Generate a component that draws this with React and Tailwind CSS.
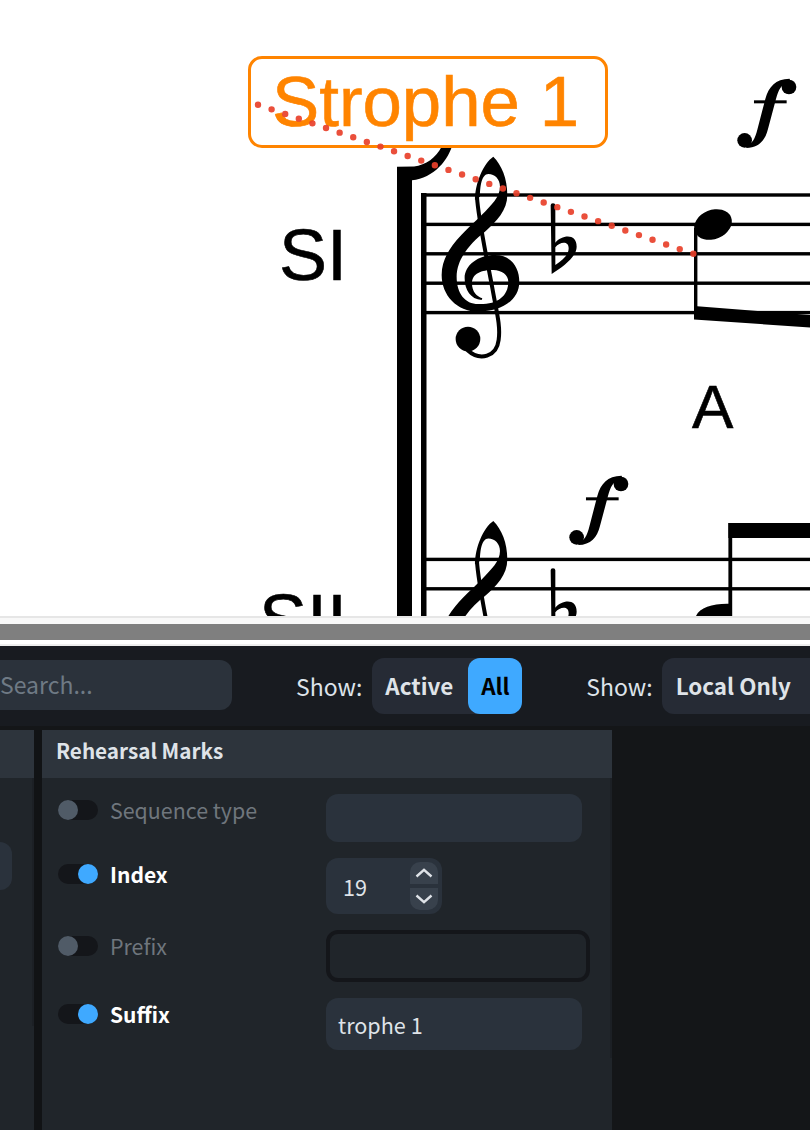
import React from 'react';

const uiFont = { fontFamily: '"Noto Sans CJK SC", "Noto Sans", sans-serif' };

const Clef = ({ dy = 0 }) => (
  <g transform={`translate(230 ${40 + dy}) scale(0.3333)`}>
    <path d="M790 350 C815 375 832 415 832 465 C832 510 800 545 765 575 C725 605 680 655 680 710 C680 760 705 792 745 792 C800 794 835 770 835 725 C835 705 815 690 790 690 C755 690 726 700 726 730 C726 755 740 770 757 775 L755 780 C722 778 704 750 704 715 C704 675 745 645 795 645 C845 645 868 685 868 725 C868 780 815 815 745 815 C680 815 635 765 635 705 C635 630 700 580 755 525 C785 495 810 470 810 440 C810 418 795 402 775 402 C755 402 750 440 750 470 L735 480 C735 430 760 370 790 350 Z" />
    <path d="M741 470 C745 540 770 650 790 760 C800 815 812 860 806 900 C800 950 750 965 712 930" fill="none" stroke="#000" strokeWidth="12" />
    <circle cx="714" cy="897" r="37" />
  </g>
);

const Flat = ({ dy = 0 }) => (
  <g transform={`translate(520 ${60 + dy}) scale(0.3333)`}>
    <path d="M92 436 Q92 430 99 430 Q106 430 106 436 L106 548 C125 525 170 518 170 560 C170 590 130 620 95 642 Z M106 562 L106 615 C130 598 146 585 146 565 C146 542 120 545 106 562 Z" fillRule="evenodd" />
  </g>
);

const Forte = ({ dx = 0, dy = 0 }) => (
  <g transform={`translate(${400 + dx} ${460 + dy}) scale(0.3333)`}>
    <path d="M665 47 C622 47 602 72 592 108 L568 200 C562 225 552 245 535 247 L535 255 C572 255 592 232 600 198 L624 108 C632 80 640 58 668 60 Z" />
    <circle cx="663" cy="72" r="22" />
    <circle cx="530" cy="232" r="22" />
    <rect x="558" y="112" width="98" height="9" />
  </g>
);

const staffY = [195, 224.4, 253.8, 283.2, 312.6];

const Score = () => (
  <div className="relative h-[616px] overflow-hidden bg-white font-['Liberation_Sans',sans-serif] text-black [-webkit-text-stroke:0.6px]">
    <svg className="absolute inset-0" width="810" height="616" viewBox="0 0 810 616">
      {staffY.map((y) => (
        <rect key={y} x="425" y={y - 1.7} width="385" height="3.4" />
      ))}
      {staffY.slice(0, 2).map((y) => (
        <rect key={y} x="425" y={y + 364.4 - 1.7} width="385" height="3.4" />
      ))}
      <rect x="397" y="178" width="15" height="438" />
      <rect x="421" y="193" width="5.5" height="423" />
      <path d="M397 166.7 L414 166.5 C426 165 436 158 442 146 L452 146 C447 163 430 180.5 408 180.5 L397 180.5 Z" />
      <Clef />
      <Clef dy={364.4} />
      <Flat />
      <Flat dy={365} />
      <ellipse cx="713" cy="224.5" rx="19.5" ry="14.5" transform="rotate(-22 713 224.5)" />
      <rect x="694" y="228" width="3.4" height="85" />
      <path d="M694 306 L810 315 L810 327.5 L694 319.5 Z" />
      <rect x="728.4" y="523" width="3.8" height="93" />
      <path d="M728.4 523 H810 V538 H728.4 Z" />
      <path d="M696 616 C700 607 715 603 732 604 L732 616 Z" />
      <Forte />
      <Forte dx={168} dy={-397} />
    </svg>

    <div className="absolute left-[248px] top-[56px] h-[92px] w-[360px] rounded-[14px] border-[3px] border-[#ff8400] bg-white" />
    <div className="absolute left-[272px] top-[67px] text-[70.8px] leading-none whitespace-nowrap text-[#ff8400]">Strophe 1</div>
    <div className="absolute left-[279px] top-[219px] text-[72px] leading-none">SI</div>
    <div className="absolute left-[259px] top-[584px] text-[72px] leading-none">SII</div>
    <div className="absolute left-[692px] top-[376px] text-[62px] leading-none">A</div>

    <svg className="absolute inset-0" width="810" height="616" viewBox="0 0 810 616">
      <line x1="258" y1="104.7" x2="693.5" y2="253.8" stroke="#e8402a" strokeOpacity="0.92" strokeWidth="6.4" strokeLinecap="round" strokeDasharray="0 14.38" />
    </svg>
  </div>
);

const Toggle = ({ on, label }) => (
  <div className="flex w-[284px] items-start pl-4">
    <div className={`relative mt-[6px] flex h-5 w-10 shrink-0 rounded-full bg-[#14161a] ${on ? 'justify-end' : 'justify-start'}`}>
      <span className={`h-5 w-5 rounded-full ${on ? 'bg-[#3fa9ff]' : 'bg-[#505b67]'}`} />
    </div>
    <span className={`ml-3 leading-8 ${on ? 'text-[21px] font-semibold text-white' : 'text-[21.4px] text-[#6f767d]'}`}>{label}</span>
  </div>
);

const Spin = ({ up }) => (
  <div className={`flex h-[22px] w-7 items-center justify-center bg-[#38414c] ${up ? 'rounded-t-[10px]' : 'rounded-b-[10px]'}`}>
    <svg width="18" height="10" viewBox="0 0 18 10" fill="none" stroke="#dfe3e8" strokeWidth="2.4">
      <path d={up ? 'M1.5 8.5 L9 1.8 L16.5 8.5' : 'M1.5 1.5 L9 8.2 L16.5 1.5'} />
    </svg>
  </div>
);

const Panel = () => (
  <div className="relative w-[570px] bg-[#20252a]">
    <div className="flex h-12 items-center bg-[#2d343c] pb-[6px] pl-[14px] text-[20.7px] font-semibold text-[#dfe3e8]">Rehearsal Marks</div>
    <div className="absolute right-0 top-12 h-[280px] w-[2px] bg-[#1c2025]" />
    <div className="flex flex-col gap-4 pt-4">
      <div className="flex">
        <Toggle label="Sequence type" />
        <div className="h-12 w-64 rounded-xl bg-[#2a323c]" />
      </div>
      <div className="flex">
        <Toggle on label="Index" />
        <div className="flex h-14 w-[116px] items-center justify-between rounded-xl bg-[#2a323c] pl-[17px] pr-1 text-[21.6px] text-[#dfe3e8]">
          <span className="pt-[2px]">19</span>
          <div className="flex flex-col gap-1">
            <Spin up />
            <Spin />
          </div>
        </div>
      </div>
      <div className="flex">
        <Toggle label="Prefix" />
        <div className="h-[52px] w-[264px] rounded-xl border-4 border-[#14161a]" />
      </div>
      <div className="flex">
        <Toggle on label="Suffix" />
        <div className="flex h-[52px] w-64 items-center rounded-xl bg-[#2a323c] pl-3 pt-[2px] text-[21.6px] text-[#dfe3e8]">trophe 1</div>
      </div>
    </div>
  </div>
);

const Toolbar = () => (
  <div className="flex h-20 items-center overflow-hidden bg-[#181b20] text-[23px]">
    <div className="-ml-3 mb-[2px] flex h-[50px] w-[244px] shrink-0 items-center rounded-xl bg-[#2b323b] pb-[2px] pl-3 text-[#6f7a85]">Search...</div>
    <span className="ml-[64px] text-[#dde3ea]">Show:</span>
    <div className="ml-[10px] flex h-14 w-[150px] shrink-0 items-center justify-between rounded-xl bg-[#262b35] pl-[13px] text-[22.4px] font-semibold text-[#dfe3e8]">
      <span className="pb-px">Active</span>
      <span className="flex h-14 w-[54px] items-center justify-center rounded-xl bg-[#3fa9ff] pb-px text-black">All</span>
    </div>
    <span className="ml-[64px] text-[#dde3ea]">Show:</span>
    <div className="ml-[9px] flex h-14 w-[170px] shrink-0 items-center rounded-l-xl bg-[#262b35] pb-px pl-[14px] text-[22.4px] font-semibold text-[#dfe3e8]">Local Only</div>
  </div>
);

export default function App() {
  return (
    <div className="flex h-[1130px] w-[810px] flex-col overflow-hidden bg-[#141618]" style={uiFont}>
      <Score />
      <div className="h-[2px] bg-[#e6e6e6]" />
      <div className="h-[6px] bg-[#f8f8f8]" />
      <div className="h-4 bg-[#7f7f7f]" />
      <div className="h-1 bg-white" />
      <div className="h-[2px] bg-[#eeeeee]" />
      <Toolbar />
      <div className="mt-1 flex flex-1">
        <div className="relative w-[34px] bg-[#20252a]">
          <div className="h-12 bg-[#2d343c]" />
          <div className="mt-16 h-12 w-3 rounded-r-xl bg-[#2a323c]" />
          <div className="absolute right-0 top-12 h-[248px] w-[2px] bg-[#1c2025]" />
        </div>
        <div className="w-2 bg-[#111315]" />
        <Panel />
      </div>
    </div>
  );
}
